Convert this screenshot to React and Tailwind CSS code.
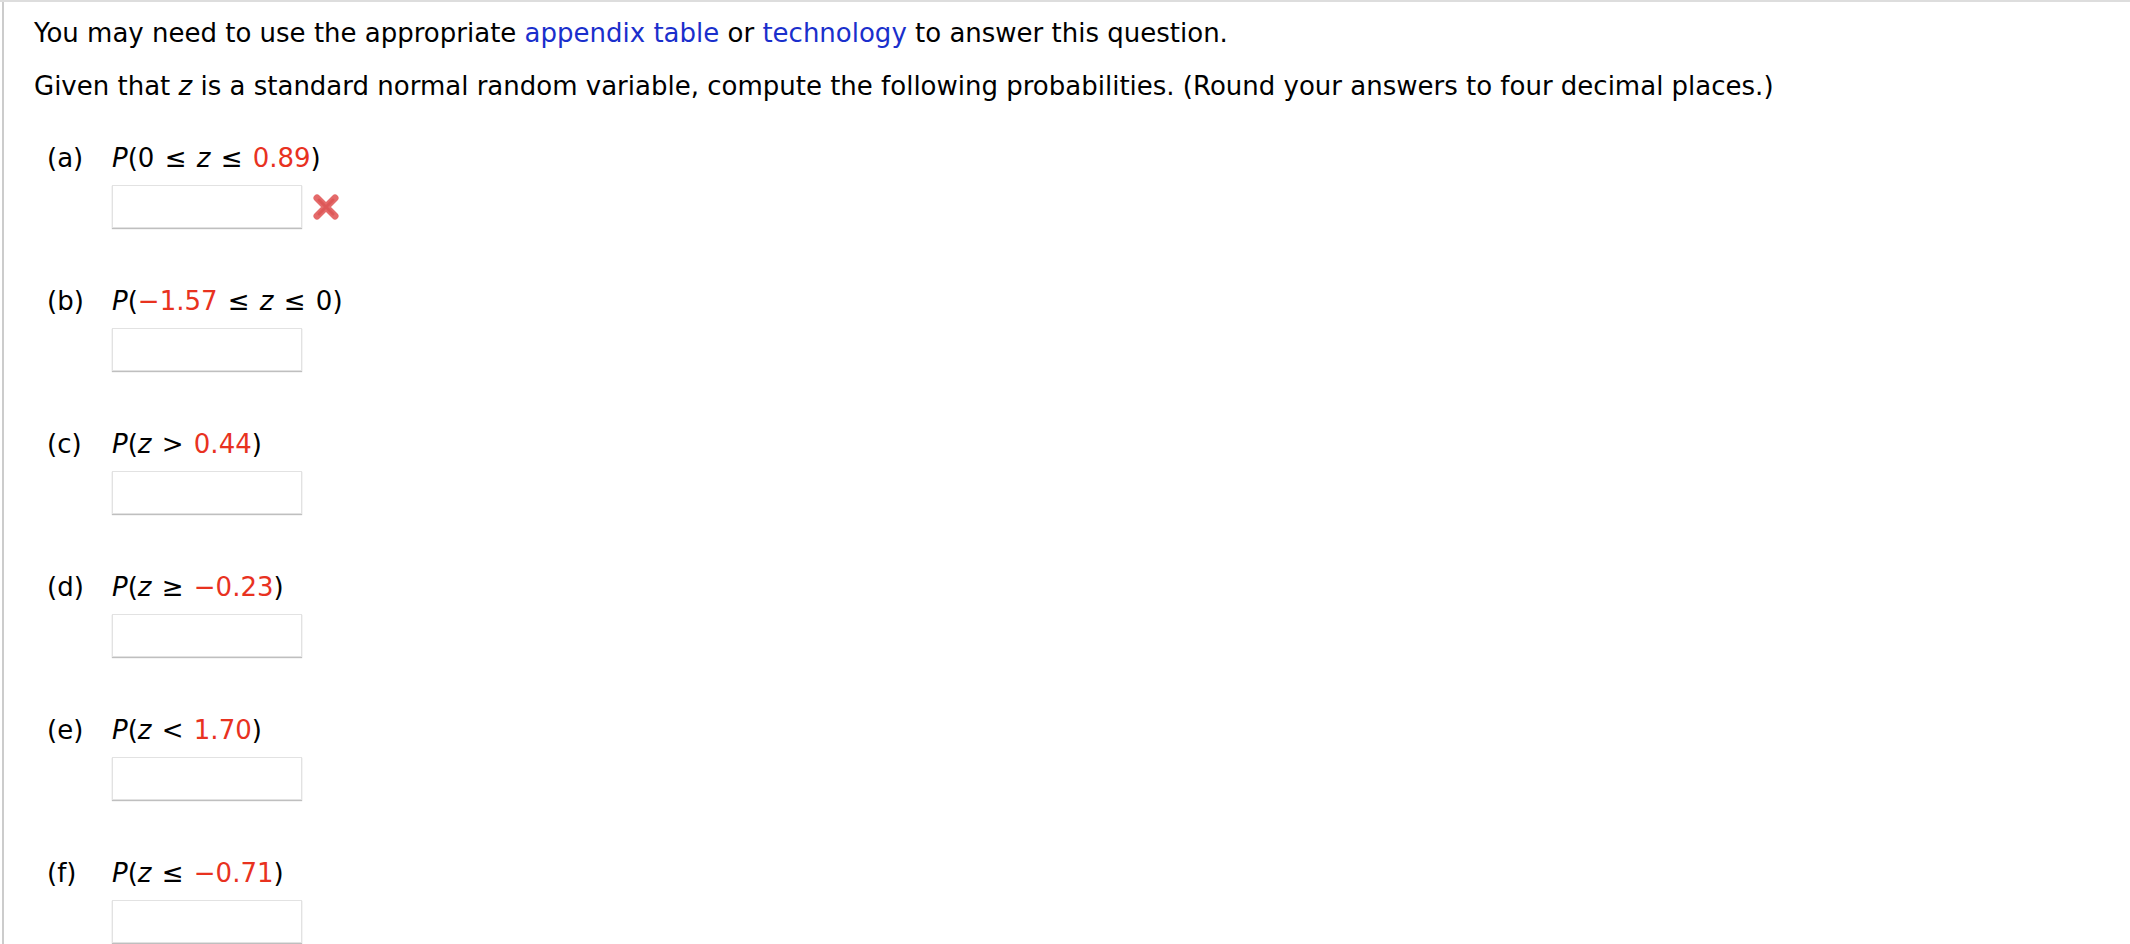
import React from 'react';

const Op = ({ children }) => <span className="mx-[2px]">{children}</span>;
const Red = ({ children }) => <span className="text-[#e8321f]">{children}</span>;

const items = [
  { label: '(a)', expr: <><i>P</i>(0 <Op>≤</Op> <i>z</i> <Op>≤</Op> <Red>0.89</Red>)</>, wrong: true },
  { label: '(b)', expr: <><i>P</i>(<Red>−1.57</Red> <Op>≤</Op> <i>z</i> <Op>≤</Op> 0)</> },
  { label: '(c)', expr: <><i>P</i>(<i>z</i> <Op>&gt;</Op> <Red>0.44</Red>)</> },
  { label: '(d)', expr: <><i>P</i>(<i>z</i> <Op>≥</Op> <Red>−0.23</Red>)</> },
  { label: '(e)', expr: <><i>P</i>(<i>z</i> <Op>&lt;</Op> <Red>1.70</Red>)</> },
  { label: '(f)', expr: <><i>P</i>(<i>z</i> <Op>≤</Op> <Red>−0.71</Red>)</> },
];

const WrongMark = () => (
  <svg width="28" height="28" viewBox="0 0 28 28" className="ml-[10px]">
    <path d="M5 5 L23 23 M23 5 L5 23" stroke="#e46a6a" strokeWidth="7" strokeLinecap="round" />
    <path d="M7 7 L21 21 M21 7 L7 21" stroke="#d84848" strokeWidth="3" strokeLinecap="round" opacity="0.5" />
  </svg>
);

const Question = ({ label, expr, wrong }) => (
  <div className="h-[143px]">
    <div className="flex leading-[32px]">
      <span className="w-[65px] ml-[13px]">{label}</span>
      <span>{expr}</span>
    </div>
    <div className="flex items-center ml-[78px] mt-[11px]">
      <input
        type="text"
        className="w-[190px] h-[43px] border border-[#e2e2e2] shadow-[0_1px_1px_rgba(0,0,0,0.25)] bg-white outline-none"
      />
      {wrong && <WrongMark />}
    </div>
  </div>
);

export default function App() {
  return (
    <div className="w-[2130px] h-[944px] overflow-hidden bg-white border-t-2 border-[#dddddd] text-black text-[26px] font-['DejaVu_Sans','Verdana',sans-serif]">
      <div className="ml-[2px] h-full border-l-2 border-[#cccccc] pl-[30px] pt-[15px]">
        <p className="leading-[32px]">
          You may need to use the appropriate <span className="text-[#1a2fcc]">appendix table</span> or{' '}
          <span className="text-[#1a2fcc]">technology</span> to answer this question.
        </p>
        <p className="leading-[32px] mt-[21px]">
          Given that <i>z</i> is a standard normal random variable, compute the following probabilities. (Round your
          answers to four decimal places.)
        </p>
        <div className="mt-[40px]">
          {items.map((q) => (
            <Question key={q.label} {...q} />
          ))}
        </div>
      </div>
    </div>
  );
}
